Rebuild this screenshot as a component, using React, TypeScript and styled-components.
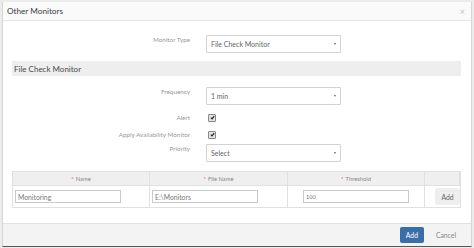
import React from 'react';
import styled, { createGlobalStyle } from 'styled-components';

const GlobalStyle = createGlobalStyle`
  html, body {
    margin: 0;
    padding: 0;
    background: #ececec;
    font-family: Lato, "Open Sans", sans-serif;
  }
`;

const Modal = styled.div`
  width: 470px;
  height: 245px;
  margin: 2px 0 0 2px;
  background: #fff;
  border-left: 1px solid #d6d6d6;
  border-right: 1px solid #d6d6d6;
  border-bottom: 1px solid #555;
  box-sizing: border-box;
  display: flex;
  flex-direction: column;
`;

const Header = styled.div`
  height: 18px;
  display: flex;
  align-items: center;
  justify-content: space-between;
  padding: 0 6px 0 4px;
  background: #fafafa;
  border-bottom: 1px solid #e6e6e6;
`;

const Title = styled.div`
  font-size: 8.2px;
  color: #3a3a3a;
`;

const Close = styled.span`
  font-size: 9px;
  color: #c4c4c4;
  line-height: 1;
`;

const Body = styled.div`
  flex: 1;
  padding: 14px 10px 0 9px;
`;

const FormRow = styled.div<{ $mt?: number; $h?: number }>`
  display: grid;
  grid-template-columns: 178px 135px;
  column-gap: 16px;
  align-items: center;
  height: ${(p) => p.$h ?? 18}px;
  margin-top: ${(p) => p.$mt ?? 0}px;
`;

const Label = styled.div<{ $top?: boolean }>`
  text-align: right;
  font-size: 6.3px;
  color: #999;
  align-self: ${(p) => (p.$top ? 'start' : 'center')};
  padding-top: ${(p) => (p.$top ? 1 : 0)}px;
`;

const Select = styled.div`
  height: 18px;
  box-sizing: border-box;
  border: 1px solid #d2d2d2;
  border-radius: 1px;
  display: flex;
  align-items: center;
  justify-content: space-between;
  padding: 0 4px 0 4px;
  font-size: 7px;
  color: #666;
  background: #fff;
`;

const Caret = styled.span`
  width: 0;
  height: 0;
  border-left: 1.3px solid transparent;
  border-right: 1.3px solid transparent;
  border-top: 2.6px solid #666;
`;

const SectionBar = styled.div`
  margin-top: 8px;
  height: 15px;
  background: #eeeeee;
  display: flex;
  align-items: center;
  padding-left: 2px;
  font-size: 8px;
  color: #4a4a4a;
`;

const Check = styled.span`
  width: 6px;
  height: 6px;
  border: 1px solid #888;
  border-radius: 1px;
  background: #e4e4e4;
  margin-left: 2px;
  display: flex;
  align-items: center;
  justify-content: center;
`;

const Table = styled.div`
  margin-top: 9px;
  border: 1px solid #e0e0e0;
  display: grid;
  grid-template-columns: 137px 138px 137px 1fr;
`;

const Th = styled.div`
  height: 13px;
  background: #efefef;
  border-right: 1px solid #e0e0e0;
  border-bottom: 1px solid #e0e0e0;
  font-size: 5.8px;
  color: #888;
  display: flex;
  align-items: center;
  justify-content: center;
  &:last-child {
    border-right: none;
  }
`;

const Star = styled.span`
  color: #d9534f;
  margin-right: 2px;
`;

const Td = styled.div<{ $pl?: number }>`
  height: 21px;
  border-right: 1px solid #e0e0e0;
  display: flex;
  align-items: center;
  padding-left: ${(p) => p.$pl ?? 2}px;
  &:last-child {
    border-right: none;
    justify-content: center;
  }
`;

const Input = styled.div<{ $small?: boolean }>`
  width: 106px;
  height: 13px;
  box-sizing: border-box;
  border: 1px solid #cacaca;
  display: flex;
  align-items: center;
  padding-left: 2px;
  font-size: ${(p) => (p.$small ? 5.5 : 6.8)}px;
  color: #777;
`;

const GrayButton = styled.div`
  width: 25px;
  height: 17px;
  background: #eeeeee;
  border-radius: 2px;
  font-size: 6.8px;
  color: #666;
  display: flex;
  align-items: center;
  justify-content: center;
  margin-left: 8px;
`;

const Footer = styled.div`
  height: 22px;
  background: #f3f3f3;
  border-top: 1px solid #e2e2e2;
  display: flex;
  align-items: center;
  justify-content: flex-end;
  padding-right: 15px;
  gap: 12px;
`;

const PrimaryButton = styled.div`
  width: 24px;
  height: 16px;
  background: #3b6ea8;
  border-radius: 2px;
  color: #fff;
  font-size: 6.8px;
  display: flex;
  align-items: center;
  justify-content: center;
`;

const TextButton = styled.div`
  font-size: 6.8px;
  color: #888;
`;

const CheckBox = () => (
  <Check>
    <svg width="5" height="5" viewBox="0 0 6 6">
      <path d="M1 3.2 L2.5 4.6 L5 1.4" stroke="#222" strokeWidth="1.4" fill="none" />
    </svg>
  </Check>
);

const App: React.FC = () => {
  return (
    <>
      <GlobalStyle />
      <Modal>
        <Header>
          <Title>Other Monitors</Title>
          <Close>×</Close>
        </Header>
        <Body>
          <FormRow>
            <Label $top>Monitor Type</Label>
            <Select>
              File Check Monitor
              <Caret />
            </Select>
          </FormRow>
          <SectionBar>File Check Monitor</SectionBar>
          <FormRow $mt={11}>
            <Label $top>Frequency</Label>
            <Select>
              1 min
              <Caret />
            </Select>
          </FormRow>
          <FormRow $mt={4} $h={17}>
            <Label>Alert</Label>
            <CheckBox />
          </FormRow>
          <FormRow $h={17}>
            <Label>Apply Availability Monitor</Label>
            <CheckBox />
          </FormRow>
          <FormRow $mt={1}>
            <Label $top>Priority</Label>
            <Select>
              Select
              <Caret />
            </Select>
          </FormRow>
          <Table>
            <Th>
              <Star>*</Star>Name
            </Th>
            <Th>
              <Star>*</Star>File Name
            </Th>
            <Th>
              <Star>*</Star>Threshold
            </Th>
            <Th />
            <Td>
              <Input>Monitoring</Input>
            </Td>
            <Td>
              <Input>E:\Monitors</Input>
            </Td>
            <Td $pl={15}>
              <Input $small>100</Input>
            </Td>
            <Td>
              <GrayButton>Add</GrayButton>
            </Td>
          </Table>
        </Body>
        <Footer>
          <PrimaryButton>Add</PrimaryButton>
          <TextButton>Cancel</TextButton>
        </Footer>
      </Modal>
    </>
  );
};

export default App;
